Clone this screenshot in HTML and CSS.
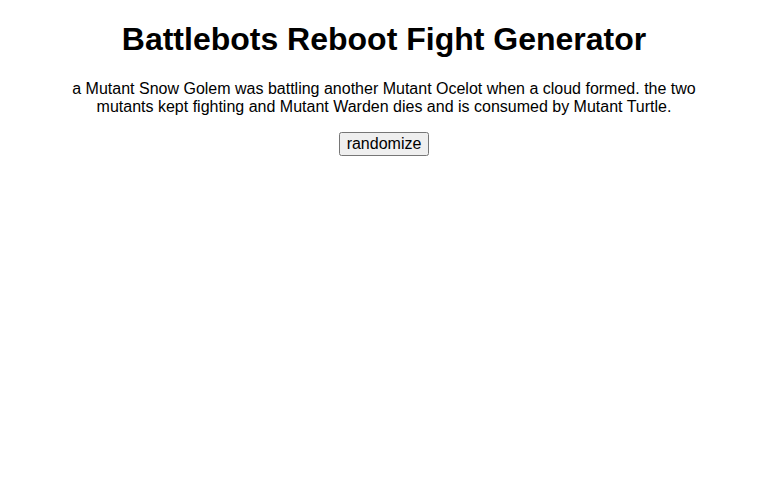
FILE: index.html
```html
<!DOCTYPE html>
<html lang="en">
<head>
  <meta charset="UTF-8">
  <title>Battlebots Reboot Fight Generator</title>
  <link rel="stylesheet" href="styles.css">
</head>
<body>
  <h1>Battlebots Reboot Fight Generator</h1>
  <p id="fight">a Mutant Snow Golem was battling another Mutant Ocelot when a cloud formed. the two mutants kept fighting and Mutant Warden dies and is consumed by Mutant Turtle.</p>
  <button id="randomize">randomize</button>
</body>
</html>
```
FILE: styles.css
```css
body {
  font-family: 'Liberation Sans', Arial, sans-serif;
  text-align: center;
  margin: 0 8px;
}

#fight {
  max-width: 640px;
  margin-left: auto;
  margin-right: auto;
}

button {
  font-family: inherit;
  font-size: 16px;
}
```
